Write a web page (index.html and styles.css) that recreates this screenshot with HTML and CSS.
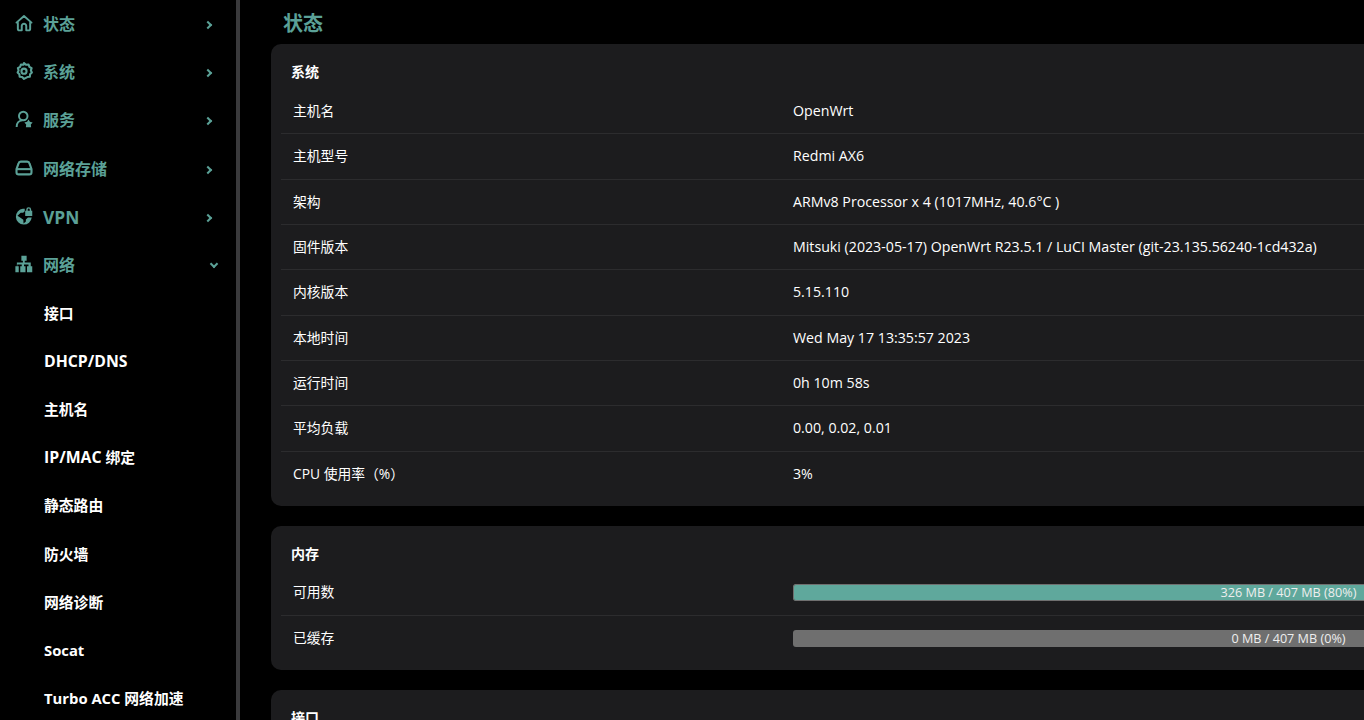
FILE: index.html
```html
<!DOCTYPE html>
<html lang="zh">
<head>
<meta charset="utf-8">
<title>状态</title>
<link rel="stylesheet" href="styles.css">
</head>
<body>
<div class="app">
<nav class="side">
  <a class="top"><svg class="ic" viewBox="0 0 24 24" fill="none" stroke="currentColor" stroke-width="2.6" stroke-linejoin="round"><path d="M2 11.500 12 2.800l10 8.700-1.800.1V20a1.800 1.800 0 0 1-1.800 1.800H15V16a3 3 0 0 0-6 0v5.800H5.600A1.800 1.800 0 0 1 3.800 20v-8.400z"/></svg><span>状态</span><i class="chev"></i></a>
  <a class="top"><svg class="ic" viewBox="0 0 24 24" fill="none" stroke="currentColor" stroke-width="2.800" stroke-linejoin="round"><path d="M12 1.500l2.600 2.200 3.400-.4 1.200 3.100 2.900 1.800-.9 3.200L22.500 14l-2.400 2.400-.3 3.300-3.300.4L12 22.500l-2.500-2.400-3.300-.4-.3-3.300L3.500 14l1.300-2.600-.9-3.200 2.900-1.800L8 3.300l3.400.4z"/><circle cx="12" cy="12.200" r="3.400"/></svg><span>系统</span><i class="chev"></i></a>
  <a class="top"><svg class="ic" viewBox="0 0 24 24" fill="none" stroke="currentColor" stroke-width="2.600"><circle cx="11" cy="8" r="5.700"/><path d="M2.200 22.500c0-5 3-8.300 7.500-8.700"/><path d="M18 12.500l1.900 3.200 3.600.8-2.400 2.700.4 3.800H14.500l.4-3.800-2.400-2.700 3.600-.8z" fill="currentColor" stroke="none"/></svg><span>服务</span><i class="chev"></i></a>
  <a class="top"><svg class="ic" viewBox="0 0 24 24" fill="none" stroke="currentColor" stroke-width="2.800" stroke-linejoin="round"><path d="M2 13.500v4A3 3 0 0 0 5 20.500h14a3 3 0 0 0 3-3v-4l-2.600-7.300A3.500 3.500 0 0 0 16.200 3.500H7.800a3.500 3.500 0 0 0-3.200 2.700z"/><path d="M2 13.500h20"/></svg><span>网络存储</span><i class="chev"></i></a>
  <a class="top"><svg class="ic" viewBox="0 0 24 24" fill="currentColor"><path d="M10.500 2.300A10.600 10.600 0 1 0 22.300 14h-5.100l-2.700 2.700v2.700l-3.100 2.700-.3-5.100-3.800-2.800-4-2.400 4.300-4.200h3.300L13 5.600V2.200z"/><path d="M15 5V3.500a3.300 3.300 0 0 1 6.600 0V5h1.400v7h-9.400V5zM16.900 5h2.800V3.500a1.400 1.400 0 0 0-2.800 0z"/></svg><span class="vpn">VPN</span><i class="chev"></i></a>
  <a class="top"><svg class="ic" viewBox="0 0 24 24" fill="currentColor"><path d="M8.500 1h7v6.500h-2.500V10h8v5h2v8h-7v-8h2v-2.500h-6V15h2v8h-7v-8h2v-2.500h-6V15h2v8H.5v-8h2v-5h8V7.500H8.500z"/></svg><span>网络</span><i class="chev down"></i></a>
  <a class="sub">接口</a>
  <a class="sub wide">DHCP/DNS</a>
  <a class="sub">主机名</a>
  <a class="sub"><b class="wide">IP/MAC</b>&nbsp;绑定</a>
  <a class="sub">静态路由</a>
  <a class="sub">防火墙</a>
  <a class="sub">网络诊断</a>
  <a class="sub">Socat</a>
  <a class="sub">Turbo ACC 网络加速</a>
</nav>
<main class="main">
  <h2 class="title">状态</h2>
  <section class="card">
    <h3>系统</h3>
    <div class="row"><div class="k">主机名</div><div class="v">OpenWrt</div></div>
    <div class="row"><div class="k">主机型号</div><div class="v">Redmi AX6</div></div>
    <div class="row"><div class="k">架构</div><div class="v">ARMv8 Processor x 4 (1017MHz, 40.6°C )</div></div>
    <div class="row"><div class="k">固件版本</div><div class="v">Mitsuki (2023-05-17) OpenWrt R23.5.1 / LuCI Master (git-23.135.56240-1cd432a)</div></div>
    <div class="row"><div class="k">内核版本</div><div class="v">5.15.110</div></div>
    <div class="row"><div class="k">本地时间</div><div class="v">Wed May 17 13:35:57 2023</div></div>
    <div class="row"><div class="k">运行时间</div><div class="v">0h 10m 58s</div></div>
    <div class="row"><div class="k">平均负载</div><div class="v">0.00, 0.02, 0.01</div></div>
    <div class="row"><div class="k">CPU 使用率（%）</div><div class="v">3%</div></div>
  </section>
  <section class="card">
    <h3>内存</h3>
    <div class="row"><div class="k">可用数</div><div class="v"><div class="bar"><div class="fill" style="width:80%"></div><span>326 MB / 407 MB (80%)</span></div></div></div>
    <div class="row"><div class="k">已缓存</div><div class="v"><div class="bar"><span>0 MB / 407 MB (0%)</span></div></div></div>
  </section>
  <section class="card">
    <h3>接口</h3>
  </section>
</main>
</div>
</body>
</html>
```
FILE: styles.css
```css
* { box-sizing: border-box; }
html, body { margin: 0; height: 720px; overflow: hidden; background: #000; }
body { font-family: "Open Sans", "Noto Sans CJK SC", sans-serif; color: #fff; font-size: 14px; }
.app { display: flex; width: 1364px; height: 720px; overflow: hidden; }
.side { flex: 0 0 240px; height: 721px; margin-top: -1px; border-right: 4px solid #3a3a3c; overflow: hidden; }
.top, .sub { display: flex; align-items: center; height: 48.2px; font-weight: 700; }
.top { color: #5ba197; font-size: 16px; padding-left: 15px; }
.sub { color: #fff; font-size: 14.8px; padding-left: 44px; }
.wide { font-size: 15.8px; font-weight: 700; }
.sub.wide { padding-top: 2px; }
.ic { width: 18px; height: 18px; flex: none; margin-right: 10px; }
.top span { flex: 1; }
.top .vpn { font-size: 17.4px; padding-top: 2px; }
.chev { width: 6px; height: 6px; border-top: 2px solid #5ba197; border-right: 2px solid #5ba197; transform: rotate(45deg); margin: 4px 25px 0 0; }
.chev.down { transform: rotate(135deg); margin: 0 19px 0 0; }
.main { flex: 0 0 1124px; padding: 0 0 0 31px; }
.title { margin: 0; height: 44px; line-height: 47px; padding-left: 12px; font-size: 20px; font-weight: 700; color: #5ba197; }
.card { background: #1c1c1e; border-radius: 10px; padding: 14px 10px 8.6px; margin-bottom: 20px; width: 1540px; }
.card h3 { margin: 0; padding-left: 10px; font-size: 14px; line-height: 27px; height: 28px; font-weight: 700; color: #fff; }
.row { display: flex; align-items: center; height: 45.33px; border-bottom: 1px solid #2c2c2e; color: #fff; }
.row:last-child { border-bottom: 0; }
.card h3 + .row { height: 48.3px; padding-top: 2px; }
.k { flex: 0 0 500px; padding-left: 12px; font-size: 13.8px; margin-bottom: 2px; }
.v { flex: 1; padding-left: 12px; font-size: 14.2px; margin-bottom: 1px; }
.bar { position: relative; height: 17px; background: #6f6f6f; border-radius: 3px; overflow: hidden; width: 991px; margin-top: 1px; }
.fill { height: 100%; background: #5fa89c; border: 1px solid #6f6f6f; border-radius: 3px; }
.bar span { position: absolute; top: 0; left: 0; width: 100%; text-align: center; font-size: 12.65px; line-height: 17px; color: #eee; }
```
